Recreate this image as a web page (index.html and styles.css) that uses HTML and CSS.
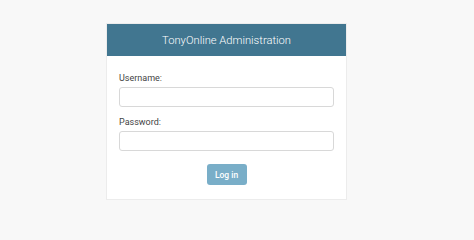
FILE: index.html
```html
<!DOCTYPE html>
<html>
<head>
<meta charset="utf-8">
<link rel="stylesheet" href="styles.css">
</head>
<body>
<div class="login">
  <div class="header">TonyOnline Administration</div>
  <form class="content">
    <div class="row">
      <label class="label">Username:</label>
      <input class="field" type="text">
    </div>
    <div class="row">
      <label class="label">Password:</label>
      <input class="field" type="password">
    </div>
    <div class="submit-row">
      <button class="btn" type="button">Log in</button>
    </div>
  </form>
</div>
</body>
</html>
```
FILE: styles.css
```css
html, body {
  margin: 0;
  padding: 0;
}
body {
  background: #f8f8f8;
  font-family: Roboto, "Liberation Sans", sans-serif;
  color: #333;
  width: 474px;
  height: 224px;
  overflow: hidden;
}
.login {
  width: 239px;
  margin: 24px 0 0 107px;
  background: #fff;
  box-shadow: 0 0 0 1px #ececec;
}
.header {
  height: 32px;
  background: #417690;
  color: #fff;
  font-size: 11.2px;
  font-weight: 300;
  display: flex;
  align-items: center;
  justify-content: center;
}
.content {
  margin: 0;
  padding: 16px 12px 14px;
  display: flex;
  flex-direction: column;
  gap: 9px;
}
.row {
  display: flex;
  flex-direction: column;
  gap: 3px;
}
.label {
  font-size: 9px;
  line-height: 12px;
  color: #444;
}
.field {
  box-sizing: border-box;
  width: 215px;
  height: 20px;
  margin: 0;
  border: 1px solid #d8d8d8;
  border-radius: 3px;
  background: #fff;
  padding: 0 4px;
  font-family: inherit;
}
.submit-row {
  display: flex;
  justify-content: center;
  padding-top: 4px;
}
.btn {
  width: 40px;
  height: 21px;
  border: none;
  border-radius: 3px;
  background: #79aec8;
  color: #fff;
  font-family: inherit;
  font-size: 8.5px;
  font-weight: 500;
  padding: 0;
}
```
